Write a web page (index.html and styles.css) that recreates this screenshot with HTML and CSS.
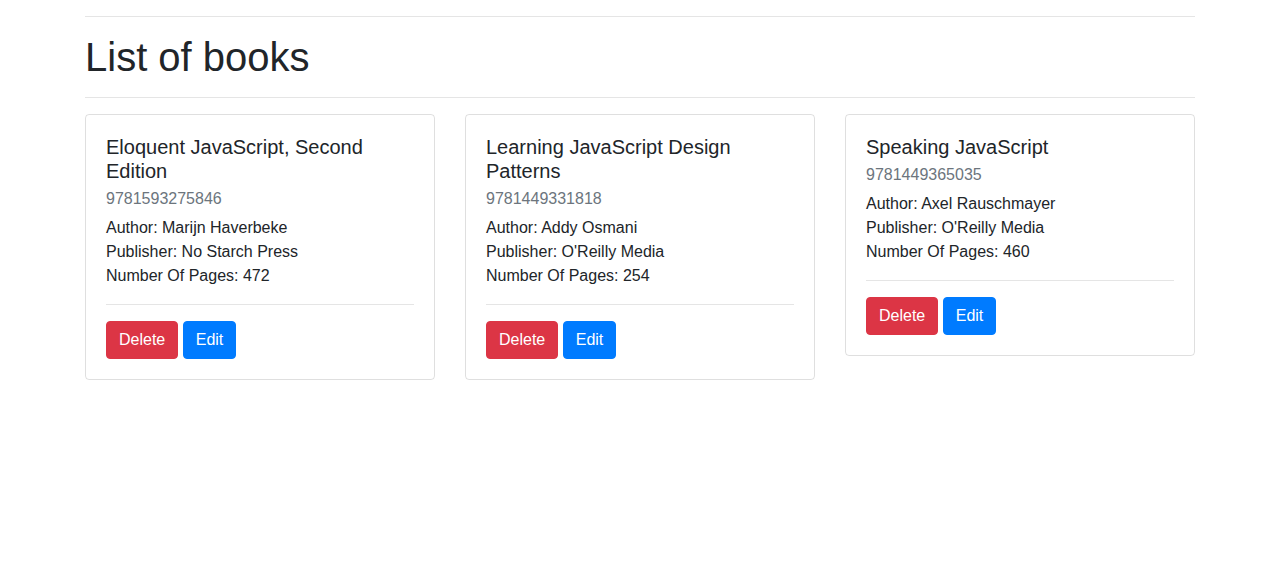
FILE: index.html
```html
<!DOCTYPE html>
<html lang="en">
<head>
    <meta charset="UTF-8">
    <meta name="viewport" content="width=device-width, initial-scale=1.0">
    <title>List of books</title>
    <link rel="stylesheet" href="styles.css">
</head>
<body>
    <div class="container">
        <hr>
        <h1>List of books</h1>
        <hr>
        <div class="book-list">
            <div class="card">
                <h5 class="card-title">Eloquent JavaScript, Second Edition</h5>
                <h6 class="card-subtitle">9781593275846</h6>
                <div class="card-text">Author: Marijn Haverbeke</div>
                <div class="card-text">Publisher: No Starch Press</div>
                <div class="card-text">Number Of Pages: 472</div>
                <hr>
                <button class="btn btn-danger">Delete</button>
                <button class="btn btn-primary">Edit</button>
            </div>
            <div class="card">
                <h5 class="card-title">Learning JavaScript Design Patterns</h5>
                <h6 class="card-subtitle">9781449331818</h6>
                <div class="card-text">Author: Addy Osmani</div>
                <div class="card-text">Publisher: O'Reilly Media</div>
                <div class="card-text">Number Of Pages: 254</div>
                <hr>
                <button class="btn btn-danger">Delete</button>
                <button class="btn btn-primary">Edit</button>
            </div>
            <div class="card">
                <h5 class="card-title">Speaking JavaScript</h5>
                <h6 class="card-subtitle">9781449365035</h6>
                <div class="card-text">Author: Axel Rauschmayer</div>
                <div class="card-text">Publisher: O'Reilly Media</div>
                <div class="card-text">Number Of Pages: 460</div>
                <hr>
                <button class="btn btn-danger">Delete</button>
                <button class="btn btn-primary">Edit</button>
            </div>
        </div>
    </div>
</body>
</html>
```

FILE: styles.css
```css
* {
    box-sizing: border-box;
}
body {
    margin: 0;
    font-family: "Liberation Sans", Arial, sans-serif;
    font-size: 16px;
    line-height: 1.5;
    color: #212529;
    background-color: #fff;
}
.container {
    max-width: 1140px;
    margin: 0 auto;
    padding: 0 15px;
}
hr {
    margin: 16px 0;
    border: 0;
    border-top: 1px solid rgba(0, 0, 0, 0.1);
}
h1 {
    margin: 0 0 8px;
    font-size: 40px;
    font-weight: 500;
    line-height: 1.2;
}
.book-list {
    display: grid;
    grid-template-columns: repeat(3, 1fr);
    gap: 30px;
    align-items: start;
}
.card {
    border: 1px solid rgba(0, 0, 0, 0.125);
    border-radius: 4px;
    padding: 20px;
}
.card-title {
    margin: 0 0 12px;
    font-size: 20px;
    font-weight: 500;
    line-height: 1.2;
}
.card-subtitle {
    margin: -6px 0 8px;
    font-size: 16px;
    font-weight: 500;
    line-height: 1.2;
    color: #6c757d;
}
.btn {
    display: inline-block;
    padding: 6px 12px;
    font-family: inherit;
    font-size: 16px;
    line-height: 1.5;
    border: 1px solid transparent;
    border-radius: 4px;
    color: #fff;
    cursor: pointer;
}
.btn-danger {
    background-color: #dc3545;
    border-color: #dc3545;
}
.btn-primary {
    background-color: #007bff;
    border-color: #007bff;
}
```
